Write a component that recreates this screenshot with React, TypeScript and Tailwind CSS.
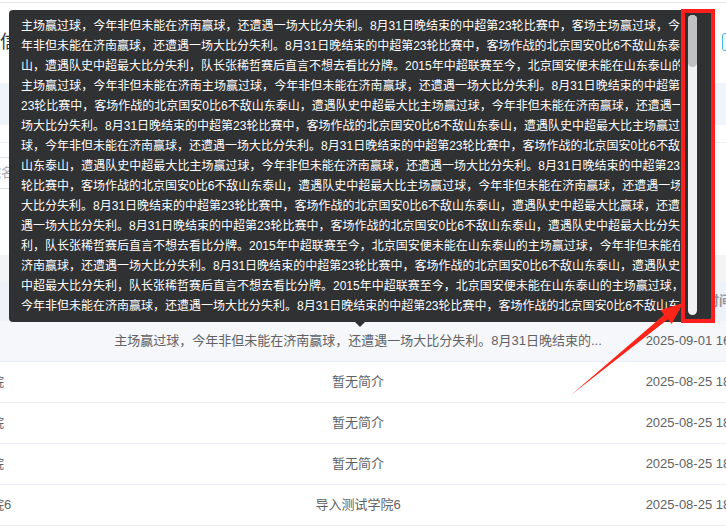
const tipLines = [
  '主场赢过球，今年非但未能在济南赢球，还遭遇一场大比分失利。8月31日晚结束的中超第23轮比赛中，客场主场赢过球，今',
  '年非但未能在济南赢球，还遭遇一场大比分失利。8月31日晚结束的中超第23轮比赛中，客场作战的北京国安0比6不敌山东泰',
  '山，遭遇队史中超最大比分失利，队长张稀哲赛后直言不想去看比分牌。2015年中超联赛至今，北京国安便未能在山东泰山的',
  '主场赢过球，今年非但未能在济南主场赢过球，今年非但未能在济南赢球，还遭遇一场大比分失利。8月31日晚结束的中超第',
  '23轮比赛中，客场作战的北京国安0比6不敌山东泰山，遭遇队史中超最大比主场赢过球，今年非但未能在济南赢球，还遭遇一',
  '场大比分失利。8月31日晚结束的中超第23轮比赛中，客场作战的北京国安0比6不敌山东泰山，遭遇队史中超最大比主场赢过',
  '球，今年非但未能在济南赢球，还遭遇一场大比分失利。8月31日晚结束的中超第23轮比赛中，客场作战的北京国安0比6不敌',
  '山东泰山，遭遇队史中超最大比主场赢过球，今年非但未能在济南赢球，还遭遇一场大比分失利。8月31日晚结束的中超第23',
  '轮比赛中，客场作战的北京国安0比6不敌山东泰山，遭遇队史中超最大比主场赢过球，今年非但未能在济南赢球，还遭遇一场',
  '大比分失利。8月31日晚结束的中超第23轮比赛中，客场作战的北京国安0比6不敌山东泰山，遭遇队史中超最大比赢球，还遭',
  '遇一场大比分失利。8月31日晚结束的中超第23轮比赛中，客场作战的北京国安0比6不敌山东泰山，遭遇队史中超最大比分失',
  '利，队长张稀哲赛后直言不想去看比分牌。2015年中超联赛至今，北京国安便未能在山东泰山的主场赢过球，今年非但未能在',
  '济南赢球，还遭遇一场大比分失利。8月31日晚结束的中超第23轮比赛中，客场作战的北京国安0比6不敌山东泰山，遭遇队史',
  '中超最大比分失利，队长张稀哲赛后直言不想去看比分牌。2015年中超联赛至今，北京国安便未能在山东泰山的主场赢过球，',
  '今年非但未能在济南赢球，还遭遇一场大比分失利。8月31日晚结束的中超第23轮比赛中，客场作战的北京国安0比6不敌山东',
]

const rows = [
  { name: '', intro: '主场赢过球，今年非但未能在济南赢球，还遭遇一场大比分失利。8月31日晚结束的...', time: '2025-09-01 16:28:35', hover: true },
  { name: '导入测试学院', intro: '暂无简介', time: '2025-08-25 18:30:12' },
  { name: '导入测试学院', intro: '暂无简介', time: '2025-08-25 18:30:12' },
  { name: '导入测试学院', intro: '暂无简介', time: '2025-08-25 18:30:12' },
  { name: '导入测试学院6', intro: '导入测试学院6', time: '2025-08-25 18:30:12' },
]

/** Dark tooltip with its own scrollbar, shown over the intro cell. */
function IntroTooltip() {
  return (
    <div className="absolute left-[9px] top-[10px] h-[312px] w-[702px] rounded-[4px] bg-[#303133]">
      <div className="flex h-full">
        <div className="w-[671px] overflow-hidden pl-[12px] pt-[6px]">
          {tipLines.map((line, i) => (
            <div
              key={i}
              className="h-[20px] whitespace-nowrap text-justify text-[12px] leading-[20px] text-white [text-align-last:justify]"
            >
              {line}
            </div>
          ))}
        </div>
        <div className="ml-[8px] mt-[5px] h-[300px] w-[9px] rounded-full bg-[#f1f1f1]">
          <div className="h-[52px] w-full rounded-full bg-[#c1c1c1]" />
        </div>
      </div>
      <div className="absolute -bottom-[5px] left-1/2 h-0 w-0 -translate-x-1/2 border-x-[5px] border-t-[5px] border-x-transparent border-t-[#303133]" />
    </div>
  )
}

export default function App() {
  return (
    <div className="relative h-[528px] w-[726px] overflow-hidden bg-white font-['Liberation_Sans','Noto_Sans_CJK_SC',sans-serif]">
      <div className="-ml-[80px] w-[900px]">
        <div className="h-[2px]" />
        <div className="border-t border-[#e4e7ed]" />

        <div className="flex h-[80px] items-start justify-between pt-[27px]">
          <h1 className="ml-[44px] text-[18px] leading-[24px] text-[#303133]">学院信息管理</h1>
          <button className="mr-[70px] mt-[3px] h-[18px] w-[28px] rounded-[3px] border border-[#45bde6] bg-[#f2fbfe]" />
        </div>

        <div className="h-[42px] bg-[#f0f5fc]" />
        <div className="h-[18px] border-b border-[#ebeef5]" />

        <div className="pt-[14px]">
          <div className="ml-[4px] flex h-[32px] w-[220px] items-center rounded-[4px] border border-[#dcdfe6] px-[11px] text-[13px] text-[#a8abb2]">
            请输入学院名称
          </div>
        </div>

        <div className="h-[66px]" />
        <div className="h-[26px] bg-[#f4f4f5]" />

        <div className="flex h-[40px] items-center bg-[#eef2f9] text-[13px] font-bold text-[#909399]">
          <div className="w-[180px] pl-[6px]">学院名称</div>
          <div className="w-[516px] text-center">学院简介</div>
          <div className="w-[180px] text-center">创建时间</div>
        </div>

        {rows.map((row, i) => (
          <div
            key={i}
            className={`flex h-[41px] items-center border-b border-[#ebeef5] text-[13px] text-[#606266] ${row.hover ? 'bg-[#f5f7fa]' : 'bg-white'}`}
          >
            <div className="w-[180px] whitespace-nowrap pl-[6px]">{row.name}</div>
            <div className="w-[516px] whitespace-nowrap text-center">{row.intro}</div>
            <div className="w-[180px] whitespace-nowrap text-center">{row.time}</div>
          </div>
        ))}
      </div>

      <IntroTooltip />

      {/* annotation: red box round the scrollbar and arrow pointing at it */}
      <div className="absolute left-[681px] top-[9px] h-[314px] w-[34px] border-[4px] border-[#ff1e1e]" />
      <svg className="absolute left-0 top-0" width="726" height="528" viewBox="0 0 726 528">
        <polygon
          points="571,395 667.9,319.3 671.7,324 683,303 660.3,310 664.1,314.7"
          fill="#ff2419"
        />
      </svg>
    </div>
  )
}
